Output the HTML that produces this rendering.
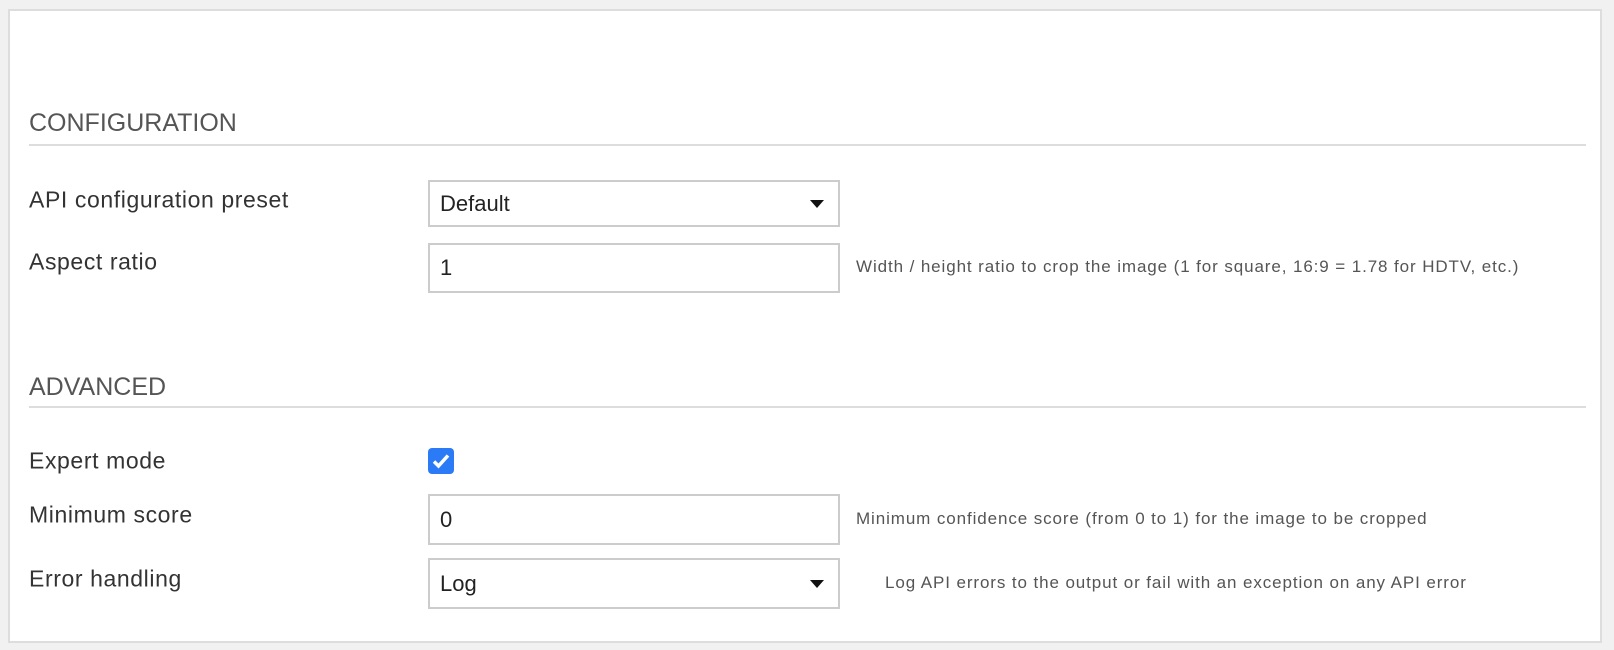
<!DOCTYPE html>
<html><head><style>
body{margin:0;width:1614px;height:650px;background:#f1f1f1;font-family:"Liberation Sans",sans-serif;position:relative;overflow:hidden}
.panel{position:absolute;left:8px;top:9px;width:1594px;height:634px;background:#fff;border:2px solid #ddd;box-sizing:border-box}
.a{position:absolute;white-space:nowrap}
.h{font-size:25px;color:#555;left:29px}
.line{position:absolute;left:29px;width:1557px;height:2px;background:#ddd}
.lab{font-size:23px;letter-spacing:0.6px;color:#333;left:29px;transform:translateY(-50%)}
.box{position:absolute;left:428px;width:412px;border:2px solid #ccc;box-sizing:border-box;background:#fff;font-size:22px;color:#222;padding-left:10px;display:flex;align-items:center}
.tri{position:absolute;right:14px;top:50%;margin-top:-4px;width:0;height:0;border-left:7px solid transparent;border-right:7px solid transparent;border-top:8px solid #111}
.help{font-size:17px;letter-spacing:0.9px;color:#555;transform:translateY(-50%)}
.cb{position:absolute;left:428px;top:448px;width:26px;height:26px;background:#2a7bf5;border-radius:4px}
</style></head><body>
<div class="panel"></div>
<div class="a h" style="top:109px">CONFIGURATION</div>
<div class="line" style="top:144px"></div>
<div class="a lab" style="top:200px">API configuration preset</div>
<div class="box" style="top:180px;height:47px">Default<div class="tri"></div></div>
<div class="a lab" style="top:262px">Aspect ratio</div>
<div class="box" style="top:243px;height:50px">1</div>
<div class="a help" style="left:856px;top:267px">Width / height ratio to crop the image (1 for square, 16:9 = 1.78 for HDTV, etc.)</div>
<div class="a h" style="top:373px">ADVANCED</div>
<div class="line" style="top:406px"></div>
<div class="a lab" style="top:461px">Expert mode</div>
<div class="cb"><svg width="26" height="26" viewBox="0 0 26 26"><path d="M6 13.5l4.5 4.5L20 7.5" fill="none" stroke="#fff" stroke-width="3.5"/></svg></div>
<div class="a lab" style="top:515px">Minimum score</div>
<div class="box" style="top:494px;height:51px">0</div>
<div class="a help" style="left:856px;top:519px">Minimum confidence score (from 0 to 1) for the image to be cropped</div>
<div class="a lab" style="top:579px">Error handling</div>
<div class="box" style="top:558px;height:51px">Log<div class="tri"></div></div>
<div class="a help" style="left:885px;top:583px">Log API errors to the output or fail with an exception on any API error</div>
</body></html>
